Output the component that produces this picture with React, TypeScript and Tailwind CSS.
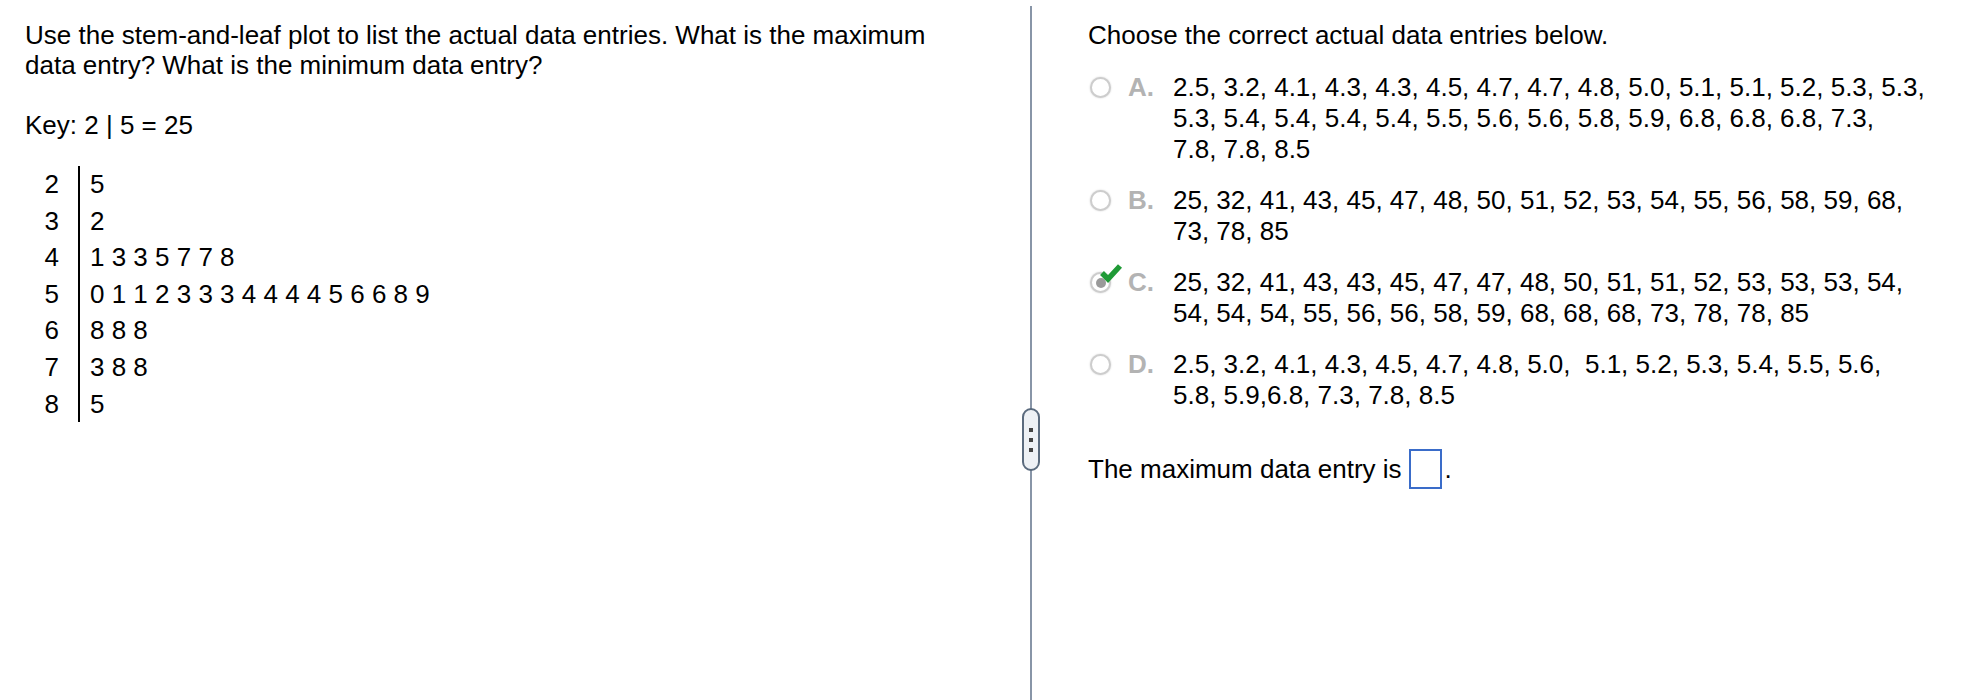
const stems: [string, string][] = [
  ["2", "5"],
  ["3", "2"],
  ["4", "1 3 3 5 7 7 8"],
  ["5", "0 1 1 2 3 3 3 4 4 4 4 5 6 6 8 9"],
  ["6", "8 8 8"],
  ["7", "3 8 8"],
  ["8", "5"],
];

const options = [
  {
    letter: "A.",
    lines: [
      "2.5, 3.2, 4.1, 4.3, 4.3, 4.5, 4.7, 4.7, 4.8, 5.0, 5.1, 5.1, 5.2, 5.3, 5.3,",
      "5.3, 5.4, 5.4, 5.4, 5.4, 5.5, 5.6, 5.6, 5.8, 5.9, 6.8, 6.8, 6.8, 7.3,",
      "7.8, 7.8, 8.5",
    ],
  },
  {
    letter: "B.",
    lines: [
      "25, 32, 41, 43, 45, 47, 48, 50, 51, 52, 53, 54, 55, 56, 58, 59, 68,",
      "73, 78, 85",
    ],
  },
  {
    letter: "C.",
    checked: true,
    lines: [
      "25, 32, 41, 43, 43, 45, 47, 47, 48, 50, 51, 51, 52, 53, 53, 53, 54,",
      "54, 54, 54, 55, 56, 56, 58, 59, 68, 68, 68, 73, 78, 78, 85",
    ],
  },
  {
    letter: "D.",
    lines: [
      "2.5, 3.2, 4.1, 4.3, 4.5, 4.7, 4.8, 5.0,\u00a0 5.1, 5.2, 5.3, 5.4, 5.5, 5.6,",
      "5.8, 5.9,6.8, 7.3, 7.8, 8.5",
    ],
  },
];

function Radio({ checked }: { checked?: boolean }) {
  return (
    <div className="relative w-[21px] h-[21px] mt-[5px]">
      <div className="w-[21px] h-[21px] rounded-full border-2 border-[#cdcdcd] bg-white shadow-[0_0_2px_#d0d0d0] flex items-center justify-center">
        {checked && <div className="w-[10px] h-[10px] rounded-full bg-[#9a9a9a]" />}
      </div>
      {checked && (
        <svg className="absolute -top-[9px] left-[9px]" width="24" height="22" viewBox="0 0 24 22">
          <polyline points="3,10 9,16 21,3" fill="none" stroke="#1f9a36" strokeWidth="5.5" strokeLinejoin="miter" />
        </svg>
      )}
    </div>
  );
}

export default function App() {
  return (
    <div className="w-[1962px] h-[700px] bg-white text-black flex relative font-['Liberation_Sans',Arial,sans-serif] text-[26px] leading-[30px] overflow-hidden">
      {/* Left: question */}
      <div className="w-[1030px] pl-[25px] pt-[20px]">
        <p>
          Use the stem-and-leaf plot to list the actual data entries. What is the maximum
          <br />
          data entry? What is the minimum data entry?
        </p>
        <p className="mt-[30px]">Key: 2 | 5 = 25</p>

        <div className="mt-[26px] ml-[19px] flex">
          <div className="flex flex-col">
            {stems.map(([s]) => (
              <div key={s} className="h-[36.6px] leading-[36.6px] w-[15px] text-right">
                {s}
              </div>
            ))}
          </div>
          <div className="w-[2px] bg-black ml-[19px] mr-[10px]" />
          <div className="flex flex-col">
            {stems.map(([s, l]) => (
              <div key={s} className="h-[36.6px] leading-[36.6px] whitespace-pre">
                {l}
              </div>
            ))}
          </div>
        </div>
      </div>

      {/* Divider */}
      <div className="w-[2px] bg-[#8895a7] mt-[6px]" />
      <div className="absolute left-[1022px] top-[408px] w-[18px] h-[63px] rounded-full border-2 border-[#5b6b7e] bg-[#eef1f5] flex flex-col items-center justify-center gap-[6px]">
        <div className="w-[4px] h-[4px] bg-[#444]" />
        <div className="w-[4px] h-[4px] bg-[#444]" />
        <div className="w-[4px] h-[4px] bg-[#444]" />
      </div>

      {/* Right: answers */}
      <div className="flex-1 pl-[56px] pt-[20px]">
        <p>Choose the correct actual data entries below.</p>

        <div className="mt-[22px] flex flex-col gap-[20px] leading-[31px]">
          {options.map((o) => (
            <div key={o.letter} className="flex items-start">
              <div className="w-[40px] pl-[2px]">
                <Radio checked={o.checked} />
              </div>
              <div className="w-[45px] text-[#b3b3b3] font-bold">{o.letter}</div>
              <div className="whitespace-pre">
                {o.lines.map((ln, i) => (
                  <div key={i}>{ln}</div>
                ))}
              </div>
            </div>
          ))}
        </div>

        <div className="mt-[38px] flex items-center h-[40px]">
          <span>The maximum data entry is</span>
          <span className="ml-[7px] w-[33px] h-[40px] border-2 border-[#3a6cc9]" />
          <span className="ml-[3px]">.</span>
        </div>
      </div>
    </div>
  );
}
